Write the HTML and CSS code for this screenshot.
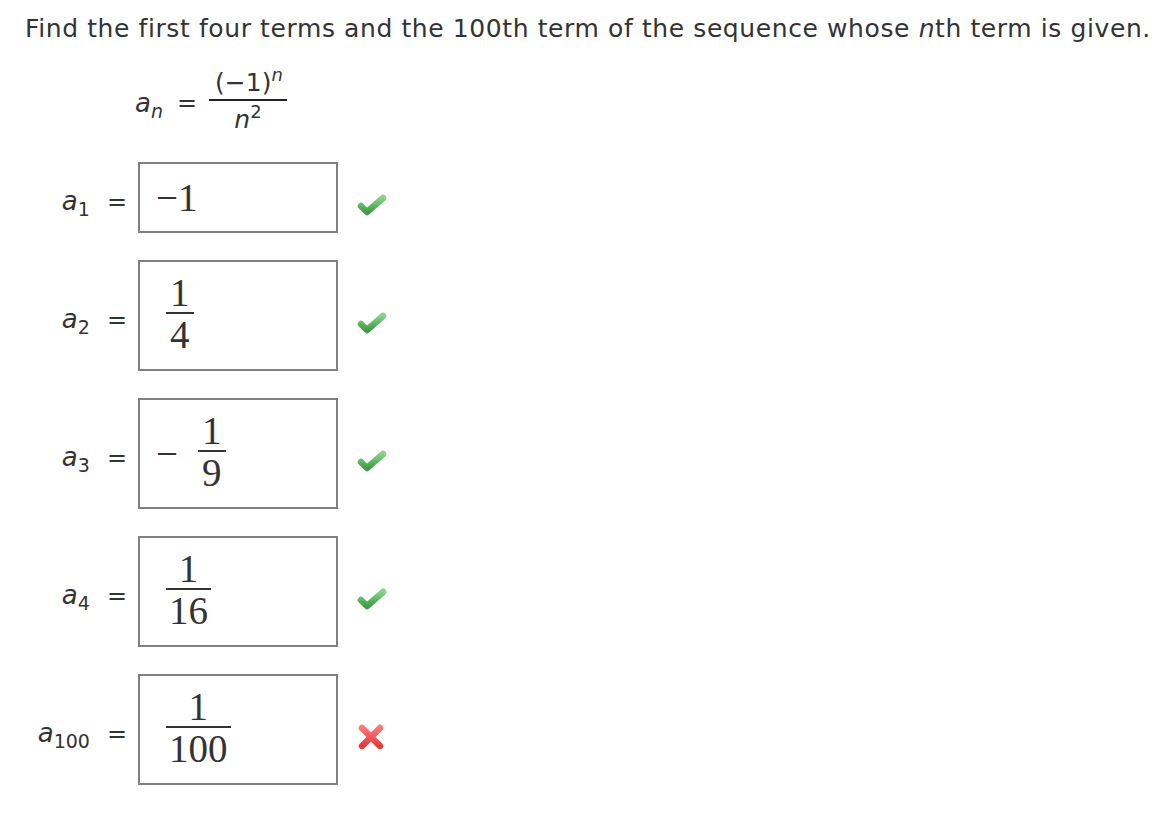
FILE: index.html
```html
<!DOCTYPE html>
<html lang="en">
<head>
  <meta charset="UTF-8">
  <title>Sequence terms</title>
  <link rel="stylesheet" href="styles.css">
</head>
<body>
  <p class="question">Find the first four terms and the 100th term of the sequence whose <i>n</i>th term is given.</p>

  <div class="formula">
    <span class="var">a<sub class="it">n</sub></span>
    <span class="eq">=</span>
    <span class="frac">
      <span class="num">(&minus;1)<sup>n</sup></span>
      <span class="den"><i>n</i><sup>2</sup></span>
    </span>
  </div>

  <div class="answers">
    <div class="row">
      <div class="label"><span class="var">a<sub>1</sub></span><span class="eq">=</span></div>
      <div class="answer short"><span class="tex">&minus;1</span></div>
      <div class="mark">
        <svg width="32" height="24" viewBox="0 0 32 24"><use href="#check"/></svg>
      </div>
    </div>

    <div class="row">
      <div class="label"><span class="var">a<sub>2</sub></span><span class="eq">=</span></div>
      <div class="answer">
        <span class="tfrac"><span class="tnum">1</span><span class="tden">4</span></span>
      </div>
      <div class="mark">
        <svg width="32" height="24" viewBox="0 0 32 24"><use href="#check"/></svg>
      </div>
    </div>

    <div class="row">
      <div class="label"><span class="var">a<sub>3</sub></span><span class="eq">=</span></div>
      <div class="answer">
        <span class="tex minus">&minus;</span>
        <span class="tfrac"><span class="tnum">1</span><span class="tden">9</span></span>
      </div>
      <div class="mark">
        <svg width="32" height="24" viewBox="0 0 32 24"><use href="#check"/></svg>
      </div>
    </div>

    <div class="row">
      <div class="label"><span class="var">a<sub>4</sub></span><span class="eq">=</span></div>
      <div class="answer">
        <span class="tfrac"><span class="tnum">1</span><span class="tden">16</span></span>
      </div>
      <div class="mark">
        <svg width="32" height="24" viewBox="0 0 32 24"><use href="#check"/></svg>
      </div>
    </div>

    <div class="row">
      <div class="label"><span class="var">a<sub>100</sub></span><span class="eq">=</span></div>
      <div class="answer">
        <span class="tfrac"><span class="tnum">1</span><span class="tden">100</span></span>
      </div>
      <div class="mark">
        <svg width="32" height="30" viewBox="0 0 32 30">
          <path d="M6 6 L24 24 M24 6 L6 24" stroke="url(#red)" stroke-width="6.5" stroke-linecap="round"/>
        </svg>
      </div>
    </div>
  </div>

  <svg width="0" height="0" class="defs">
    <defs>
      <linearGradient id="green" x1="0" y1="0" x2="0" y2="1">
        <stop offset="0" stop-color="#86d486"/>
        <stop offset="1" stop-color="#3f9d45"/>
      </linearGradient>
      <linearGradient id="red" x1="0" y1="0" x2="0" y2="1">
        <stop offset="0" stop-color="#ff7676"/>
        <stop offset="1" stop-color="#e43a3a"/>
      </linearGradient>
      <path id="check" d="M5 13 L11 19 L27 5" fill="none" stroke="url(#green)" stroke-width="6.5" stroke-linejoin="round" stroke-linecap="round"/>
    </defs>
  </svg>
</body>
</html>
```

FILE: styles.css
```css
body {
  margin: 0;
  padding: 0 0 0 25px;
  background: #fff;
  color: #333;
  font-family: "DejaVu Sans", Verdana, sans-serif;
}
.question {
  margin: 13px 0 0 0;
  font-size: 25px;
  letter-spacing: 0.6px;
  line-height: 32px;
}
.formula {
  display: flex;
  align-items: center;
  margin: 22px 0 0 110px;
  font-size: 25px;
}
.var {
  font-style: italic;
  font-size: 26px;
}
.var sub {
  font-style: normal;
  font-size: 19px;
  vertical-align: -6px;
  line-height: 0;
}
.var sub.it {
  font-style: italic;
}
.eq {
  margin: 0 12px 0 14px;
  font-size: 24px;
}
.frac {
  display: inline-flex;
  flex-direction: column;
  align-items: center;
}
.num {
  border-bottom: 2px solid #222;
  padding: 0 4px 0 6px;
  line-height: 32px;
}
.num sup, .den sup {
  font-size: 18px;
  font-style: italic;
  vertical-align: 10px;
  line-height: 0;
}
.den sup {
  font-style: normal;
}
.den {
  line-height: 38px;
}
.answers {
  margin: 23px 0 0 0;
}
.row {
  display: flex;
  align-items: center;
  margin-bottom: 27px;
}
.label {
  width: 127px;
  margin-left: -25px;
  display: flex;
  justify-content: flex-end;
  align-items: baseline;
  padding-top: 6px;
}
.label .eq {
  margin: 0 0 0 17px;
}
.answer {
  box-sizing: border-box;
  width: 200px;
  height: 111px;
  margin-left: 11px;
  border: 2px solid #808080;
  padding-left: 16px;
  display: flex;
  align-items: center;
  font-family: "Liberation Serif", "Times New Roman", serif;
  font-size: 39px;
  color: #333;
}
.answer.short {
  height: 71px;
}
.tex.minus {
  margin-right: 10px;
}
.tfrac {
  display: inline-flex;
  flex-direction: column;
  align-items: center;
  padding-left: 10px;
}
.tnum {
  border-bottom: 2px solid #333;
  padding: 0 4px 3px;
  align-self: stretch;
  text-align: center;
  line-height: 33px;
}
.tden {
  padding: 0 3px;
  line-height: 41px;
}
.mark {
  margin-left: 18px;
  padding-top: 14px;
  display: flex;
}
.defs {
  position: absolute;
}
```
